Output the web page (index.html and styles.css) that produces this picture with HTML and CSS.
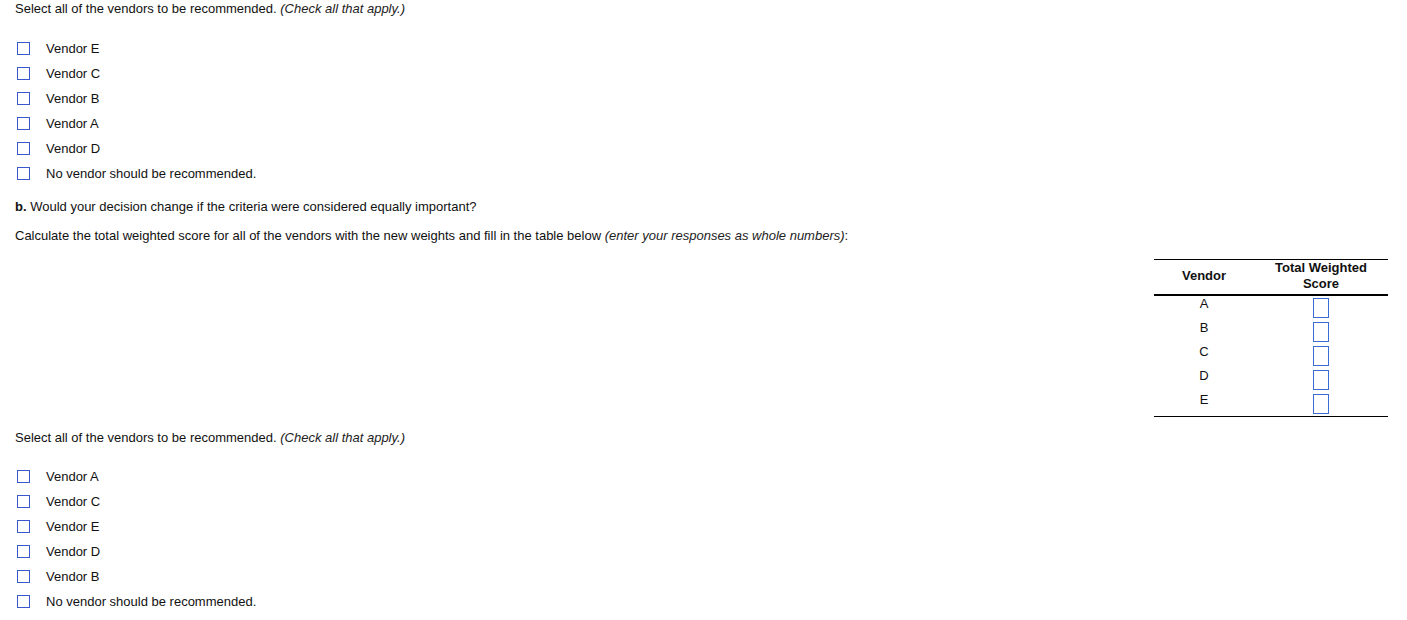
FILE: index.html
```html
<!DOCTYPE html>
<html>
<head>
<meta charset="utf-8">
<link rel="stylesheet" href="styles.css">
</head>
<body>
<div class="page">
  <section class="question">
    <p class="prompt">Select all of the vendors to be recommended. <em>(Check all that apply.)</em></p>
    <ul class="options">
      <li class="option"><span class="box"></span><span>Vendor E</span></li>
      <li class="option"><span class="box"></span><span>Vendor C</span></li>
      <li class="option"><span class="box"></span><span>Vendor B</span></li>
      <li class="option"><span class="box"></span><span>Vendor A</span></li>
      <li class="option"><span class="box"></span><span>Vendor D</span></li>
      <li class="option"><span class="box"></span><span>No vendor should be recommended.</span></li>
    </ul>
  </section>

  <p class="para part-b"><strong>b.</strong> Would your decision change if the criteria were considered equally important?</p>
  <p class="para calc">Calculate the total weighted score for all of the vendors with the new weights and fill in the table below <em>(enter your responses as whole numbers)</em>:</p>

  <div class="table-wrap">
    <table class="scores">
      <thead>
        <tr><th class="c-vendor">Vendor</th><th class="c-score">Total Weighted<br>Score</th></tr>
      </thead>
      <tbody>
        <tr><td class="c-vendor">A</td><td class="c-score"><span class="field"></span></td></tr>
        <tr><td class="c-vendor">B</td><td class="c-score"><span class="field"></span></td></tr>
        <tr><td class="c-vendor">C</td><td class="c-score"><span class="field"></span></td></tr>
        <tr><td class="c-vendor">D</td><td class="c-score"><span class="field"></span></td></tr>
        <tr><td class="c-vendor">E</td><td class="c-score"><span class="field"></span></td></tr>
      </tbody>
    </table>
  </div>

  <section class="question second">
    <p class="prompt">Select all of the vendors to be recommended. <em>(Check all that apply.)</em></p>
    <ul class="options">
      <li class="option"><span class="box"></span><span>Vendor A</span></li>
      <li class="option"><span class="box"></span><span>Vendor C</span></li>
      <li class="option"><span class="box"></span><span>Vendor E</span></li>
      <li class="option"><span class="box"></span><span>Vendor D</span></li>
      <li class="option"><span class="box"></span><span>Vendor B</span></li>
      <li class="option"><span class="box"></span><span>No vendor should be recommended.</span></li>
    </ul>
  </section>
</div>
</body>
</html>
```

FILE: styles.css
```css
html, body {
  margin: 0;
  padding: 0;
  background: #ffffff;
}
body {
  font-family: "Liberation Sans", Arial, sans-serif;
  font-size: 13px;
  color: #111;
}
.page {
  padding: 0 19px 0 15px;
}
.prompt, .para {
  margin: 0;
  line-height: 18px;
}
em {
  font-style: italic;
  color: #222;
}
.options {
  list-style: none;
  margin: 18px 0 0 0;
  padding: 0;
}
.second .options {
  margin-top: 17px;
}
.option {
  display: flex;
  align-items: center;
  height: 25px;
  padding-left: 2px;
}
.box {
  width: 13px;
  height: 13px;
  box-sizing: border-box;
  border: 1px solid #3a57cc;
  margin-right: 16px;
  flex: none;
}
.part-b {
  margin-top: 12px;
}
.calc {
  margin-top: 11px;
}
.table-wrap {
  display: flex;
  justify-content: flex-end;
  margin-top: 14px;
}
.scores {
  border-collapse: collapse;
  border-top: 1px solid #000;
  border-bottom: 1px solid #000;
}
.scores th {
  font-weight: bold;
  line-height: 16px;
  padding: 0 0 2px 0;
  vertical-align: middle;
  text-align: center;
  border-bottom: 2px solid #000;
}
.scores td {
  height: 24px;
  padding: 0;
  vertical-align: top;
  text-align: center;
  line-height: 16px;
}
.c-vendor {
  width: 100px;
}
.c-score {
  width: 134px;
}
.field {
  display: block;
  width: 16px;
  height: 20px;
  box-sizing: border-box;
  border: 1px solid #3b6bd4;
  margin: 2px auto 0;
}
.second {
  margin-top: 12px;
}
```
